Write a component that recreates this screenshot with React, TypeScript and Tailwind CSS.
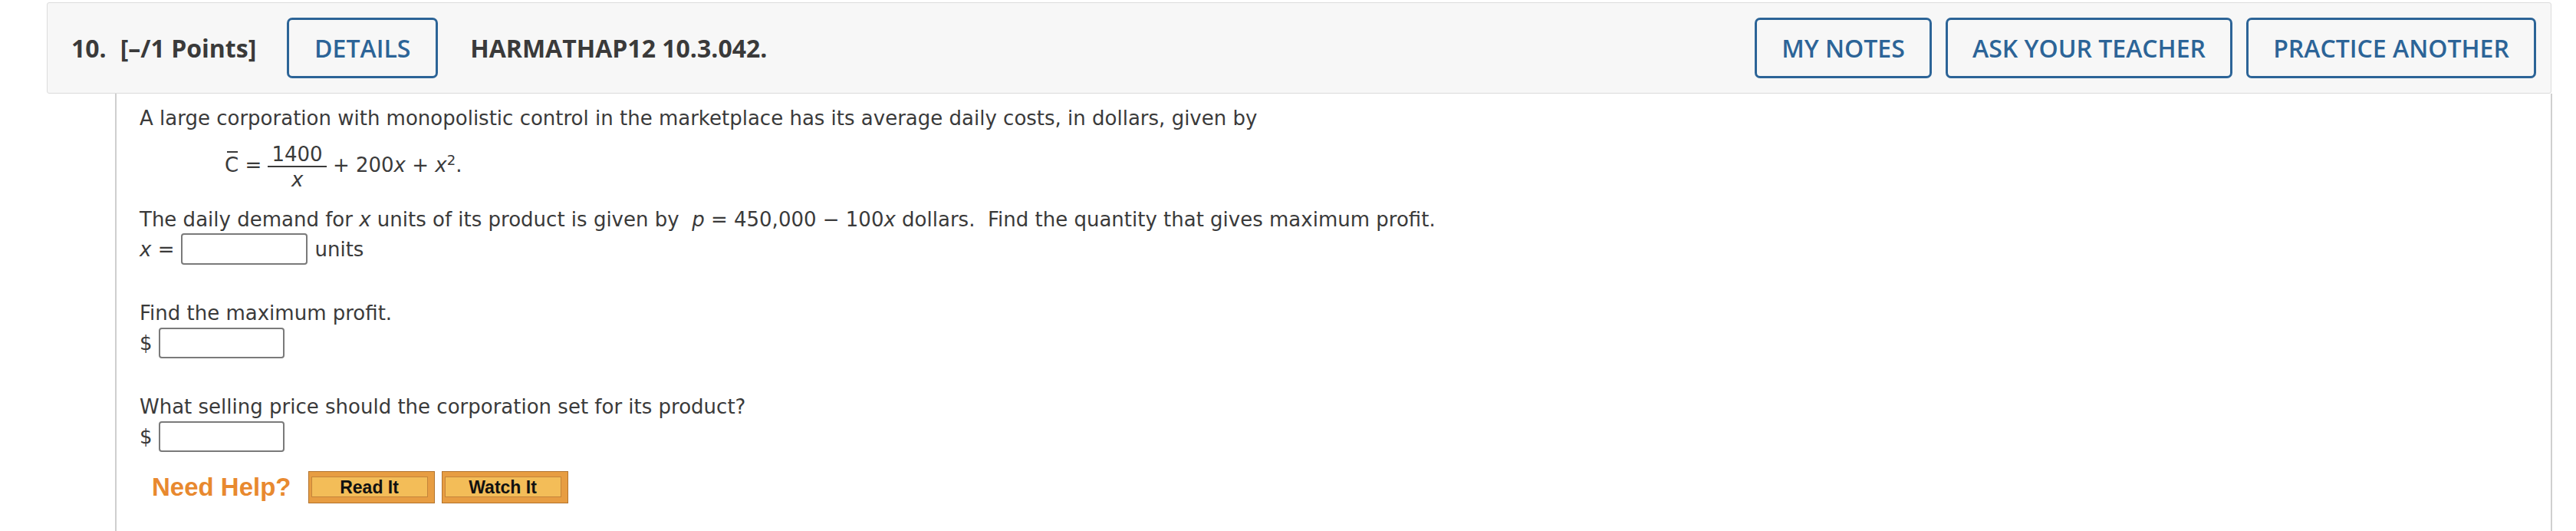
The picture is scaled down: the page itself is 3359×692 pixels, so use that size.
export default function App() {
  const blue = "border-[#2c6497] text-[#2c6497]";
  return (
    <div className="w-[3359px] h-[692px] bg-white overflow-hidden pt-[3px] pl-[61px]">
      <div className="w-[3266px]">
        <header className="h-[119px] flex items-center justify-between bg-[#f7f7f7] border border-[#dcdcdc] rounded-[3px] pl-[31px] pr-[19px] font-['Open_Sans',sans-serif] text-[32px] leading-none">
          <div className="flex items-center">
            <span className="font-bold text-[#3a3a3a]">10.</span>
            <span className="font-bold text-[#3a3a3a] ml-[18px]">[–/1 Points]</span>
            <button className={`ml-[40px] w-[197px] h-[79px] border-[3px] rounded-[7px] font-semibold flex items-center justify-center ${blue}`}>
              DETAILS
            </button>
            <span className="font-bold text-[#3a3a3a] ml-[42px]">HARMATHAP12 10.3.042.</span>
          </div>
          <div className="flex items-center gap-[18px]">
            <button className={`w-[231px] h-[79px] border-[3px] rounded-[7px] font-semibold flex items-center justify-center ${blue}`}>
              MY NOTES
            </button>
            <button className={`w-[374px] h-[79px] border-[3px] rounded-[7px] font-semibold flex items-center justify-center ${blue}`}>
              ASK YOUR TEACHER
            </button>
            <button className={`w-[378px] h-[79px] border-[3px] rounded-[7px] font-semibold flex items-center justify-center ${blue}`}>
              PRACTICE ANOTHER
            </button>
          </div>
        </header>

        <main className="ml-[89px] w-[3178px] min-h-[600px] border-x-2 border-[#cfcfcf] pt-[18px] pl-[30px] font-['DejaVu_Sans',Verdana,sans-serif] text-[26px] leading-[28px] text-[#3a3a3a]">
          <div>
            A large corporation with monopolistic control in the marketplace has its average daily costs, in dollars, given by
          </div>

          <div className="flex items-start ml-[111px] mt-[22px]">
            <div className="flex flex-col items-center mt-[7px]">
              <div className="w-[14px] h-[2px] bg-[#3a3a3a] ml-[2px]" />
              <span className="mt-[2px]">C</span>
            </div>
            <span className="mt-[11px] whitespace-pre"> = </span>
            <div className="flex flex-col">
              <div className="px-[5px] pb-[4px] border-b-2 border-[#3a3a3a] text-center leading-[22px]">1400</div>
              <div className="pt-[5px] text-center leading-[22px]">
                <i>x</i>
              </div>
            </div>
            <span className="mt-[11px] whitespace-pre">
              {" + 200"}
              <i>x</i>
              {" + "}
              <i>x</i>
              <sup className="text-[18px]">2</sup>.
            </span>
          </div>

          <div className="mt-[27px] whitespace-pre">
            {"The daily demand for "}
            <i>x</i>
            {" units of its product is given by  "}
            <i>p</i>
            {" = 450,000 − 100"}
            <i>x</i>
            {" dollars.  Find the quantity that gives maximum profit."}
          </div>

          <div className="mt-[4px] flex items-center h-[41px]">
            <span className="whitespace-pre">
              <i>x</i>
              {" ="}
            </span>
            <div className="ml-[9px] w-[165px] h-[41px] border-2 border-[#7a7a7a] rounded-[4px] bg-white" />
            <span className="ml-[9px]">units</span>
          </div>

          <div className="mt-[49px]">Find the maximum profit.</div>
          <div className="mt-[5px] flex items-center h-[40px]">
            <span>$</span>
            <div className="ml-[8px] w-[164px] h-[40px] border-2 border-[#7a7a7a] rounded-[4px] bg-white" />
          </div>

          <div className="mt-[49px]">What selling price should the corporation set for its product?</div>
          <div className="mt-[5px] flex items-center h-[40px]">
            <span>$</span>
            <div className="ml-[8px] w-[164px] h-[40px] border-2 border-[#7a7a7a] rounded-[4px] bg-white" />
          </div>

          <div className="mt-[25px] ml-[16px] flex items-center h-[42px] font-['Liberation_Sans',Arial,sans-serif]">
            <span className="text-[33px] leading-[36px] font-bold text-[#e8892f]">Need Help?</span>
            <div className="ml-[22px] w-[165px] h-[42px] border border-[#b3732c] bg-[#e79d42] pl-[3px] pt-[6px] pr-[8px] pb-[7px]">
              <div className="w-full h-full border border-[#c4843a] bg-[#f3bd58] flex items-center justify-center text-[23px] font-bold text-[#111]">
                Read It
              </div>
            </div>
            <div className="ml-[9px] w-[165px] h-[42px] border border-[#b3732c] bg-[#e79d42] pl-[3px] pt-[6px] pr-[8px] pb-[7px]">
              <div className="w-full h-full border border-[#c4843a] bg-[#f3bd58] flex items-center justify-center text-[23px] font-bold text-[#111]">
                Watch It
              </div>
            </div>
          </div>
        </main>
      </div>
    </div>
  );
}
